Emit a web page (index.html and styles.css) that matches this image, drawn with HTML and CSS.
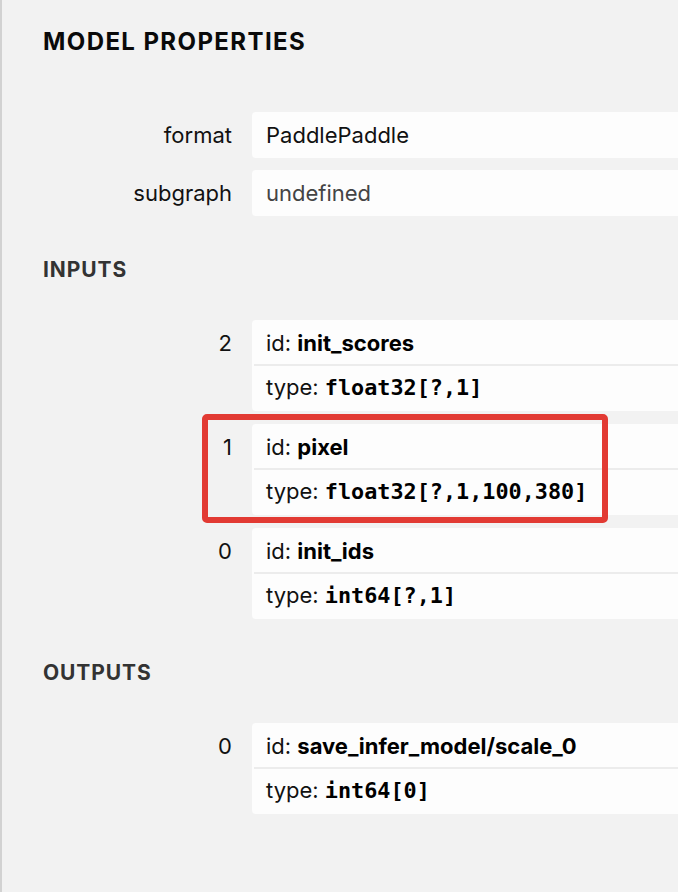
FILE: index.html
```html
<!DOCTYPE html>
<html lang="en">
<head>
<meta charset="utf-8">
<title>Model Properties</title>
<link rel="stylesheet" href="styles.css">
</head>
<body>
<div class="sidebar">
  <div class="title">Model Properties</div>

  <div class="list props">
    <div class="item">
      <div class="name">format</div>
      <div class="value">
        <div class="line">PaddlePaddle</div>
      </div>
    </div>
    <div class="item">
      <div class="name">subgraph</div>
      <div class="value">
        <div class="line muted">undefined</div>
      </div>
    </div>
  </div>

  <div class="header">Inputs</div>
  <div class="list args">
    <div class="item">
      <div class="name">2</div>
      <div class="value">
        <div class="line">id: <b>init_scores</b></div>
        <div class="line sep">type: <code>float32[?,1]</code></div>
      </div>
    </div>
    <div class="item">
      <div class="highlight"></div>
      <div class="name">1</div>
      <div class="value">
        <div class="line">id: <b>pixel</b></div>
        <div class="line sep">type: <code>float32[?,1,100,380]</code></div>
      </div>
    </div>
    <div class="item">
      <div class="name">0</div>
      <div class="value">
        <div class="line">id: <b>init_ids</b></div>
        <div class="line sep">type: <code>int64[?,1]</code></div>
      </div>
    </div>
  </div>

  <div class="header">Outputs</div>
  <div class="list args">
    <div class="item">
      <div class="name">0</div>
      <div class="value">
        <div class="line">id: <b>save_infer_model/scale_0</b></div>
        <div class="line sep">type: <code>int64[0]</code></div>
      </div>
    </div>
  </div>
</div>
</body>
</html>
```

FILE: styles.css
```css
html, body {
  margin: 0;
  padding: 0;
  height: 100%;
  overflow: hidden;
  background: #f2f2f2;
}

.sidebar {
  width: 760px;
  min-height: 100%;
  box-sizing: border-box;
  border-left: 2px solid #d2d2d2;
  font-family: Inter, "Noto Sans", sans-serif;
  color: #111;
}

.title {
  font-size: 24px;
  line-height: 30px;
  font-weight: 700;
  letter-spacing: 1.4px;
  text-transform: uppercase;
  color: #0a0a0a;
  padding: 27px 0 0 41px;
  height: 30px;
}

.list {
  display: flex;
  flex-direction: column;
}

.props {
  margin-top: 55px;
  gap: 12px;
}

.args {
  gap: 13px;
}

.header {
  font-size: 21px;
  line-height: 28px;
  font-weight: 700;
  letter-spacing: 0.9px;
  text-transform: uppercase;
  color: #333;
  margin: 40px 0 36px 41px;
}

.item {
  position: relative;
  display: flex;
  align-items: flex-start;
}

.name {
  width: 230px;
  flex: none;
  box-sizing: border-box;
  text-align: right;
  font-size: 22px;
  line-height: 26px;
  padding-top: 10px;
  color: #111;
}

.value {
  flex: 1;
  margin-left: 20px;
  background: #fdfdfd;
  border: 2px solid #fdfdfd;
  border-radius: 4px;
  font-size: 22px;
  line-height: 26px;
}

.line {
  height: 26px;
  padding: 8px 12px;
  white-space: nowrap;
}

.line.sep {
  border-top: 2px solid #ececec;
  padding-bottom: 9px;
}

.muted {
  color: #444;
}

.line b {
  font-weight: 700;
  color: #000;
}

.line code {
  font-family: "DejaVu Sans Mono", "Liberation Mono", monospace;
  font-weight: 700;
  font-size: 21.8px;
  line-height: 20px;
  color: #000;
}

.highlight {
  position: absolute;
  left: 200px;
  top: -10px;
  width: 406px;
  height: 109px;
  box-sizing: border-box;
  border: 6px solid #e23a33;
  border-radius: 5px;
  pointer-events: none;
}
```
